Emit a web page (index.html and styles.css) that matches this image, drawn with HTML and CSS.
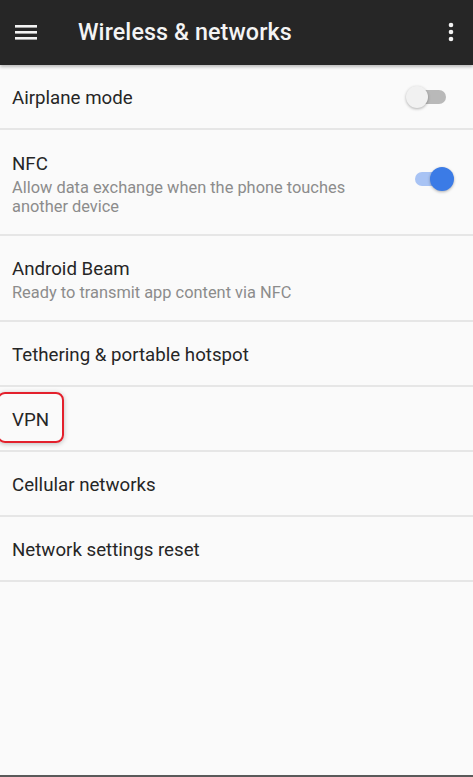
FILE: index.html
```html
<!DOCTYPE html>
<html>
<head>
<meta charset="utf-8">
<link rel="stylesheet" href="styles.css">
</head>
<body>
<div class="screen">
  <header class="toolbar">
    <svg class="menu" width="22" height="16" viewBox="0 0 22 16">
      <rect x="0" y="1" width="22" height="2.6" fill="#f2f2f2"/>
      <rect x="0" y="7" width="22" height="2.6" fill="#f2f2f2"/>
      <rect x="0" y="13" width="22" height="2.6" fill="#f2f2f2"/>
    </svg>
    <h1 class="title">Wireless &amp; networks</h1>
    <svg class="more" width="6" height="20" viewBox="0 0 6 20">
      <circle cx="3" cy="3" r="2.3" fill="#f2f2f2"/>
      <circle cx="3" cy="10" r="2.3" fill="#f2f2f2"/>
      <circle cx="3" cy="17" r="2.3" fill="#f2f2f2"/>
    </svg>
  </header>
  <main class="list">
    <div class="row row-single">
      <div class="text"><div class="primary">Airplane mode</div></div>
      <div class="switch off"><span class="track"></span><span class="thumb"></span></div>
    </div>
    <div class="row row-triple">
      <div class="text">
        <div class="primary">NFC</div>
        <div class="secondary">Allow data exchange when the phone touches another device</div>
      </div>
      <div class="switch on"><span class="track"></span><span class="thumb"></span></div>
    </div>
    <div class="row row-double">
      <div class="text">
        <div class="primary">Android Beam</div>
        <div class="secondary">Ready to transmit app content via NFC</div>
      </div>
    </div>
    <div class="row row-single">
      <div class="text"><div class="primary">Tethering &amp; portable hotspot</div></div>
    </div>
    <div class="row row-single">
      <div class="text"><div class="primary vpn">VPN<span class="highlight"></span></div></div>
    </div>
    <div class="row row-single">
      <div class="text"><div class="primary">Cellular networks</div></div>
    </div>
    <div class="row row-single">
      <div class="text"><div class="primary">Network settings reset</div></div>
    </div>
  </main>
</div>
</body>
</html>
```
FILE: styles.css
```css
* { box-sizing: border-box; }
html, body { margin: 0; padding: 0; }
body {
  width: 473px;
  height: 777px;
  overflow: hidden;
  background: #fafafa;
  font-family: Roboto, "Liberation Sans", sans-serif;
}
.screen {
  height: 777px;
  display: flex;
  flex-direction: column;
  border-bottom: 2px solid #5a5a5a;
  background: #fafafa;
}
.toolbar {
  height: 65px;
  background: #262626;
  display: flex;
  align-items: center;
  padding: 0 19px 0 15px;
  box-shadow: 0 2px 3px rgba(0,0,0,0.25);
  position: relative;
  z-index: 2;
  flex-shrink: 0;
}
.menu { display: block; margin-top: -2px; }
.title {
  margin: 0 0 0 41px;
  flex: 1;
  color: #f4f4f4;
  font-size: 23.3px;
  font-weight: 500;
  letter-spacing: 0.1px;
  margin-top: -1px;
}
.more { display: block; margin-top: -1px; }
.list {
  display: flex;
  flex-direction: column;
}
.row {
  display: flex;
  align-items: center;
  padding: 0 16px 0 12px;
  border-bottom: 2px solid #e6e6e6;
}
.row-single { height: 65px; }
.row-triple { height: 106px; }
.row-double { height: 86px; }
.text { flex: 1; }
.primary {
  font-size: 18.7px;
  color: #262626;
  line-height: 22px;
}
.secondary {
  font-size: 16.4px;
  color: #8c8c8c;
  line-height: 19.5px;
  margin-top: 3px;
  max-width: 360px;
}
.row-single .text { margin-top: 3px; }
.row-triple .text, .row-double .text { margin-top: 5px; }
.vpn { position: relative; display: inline-block; }
.highlight {
  position: absolute;
  left: -15px;
  top: -17px;
  width: 67px;
  height: 51px;
  border: 2.5px solid #e3202c;
  border-radius: 8px;
  box-shadow: 0 1px 5px rgba(0,0,0,0.25);
}
.switch {
  position: relative;
  height: 22px;
  flex-shrink: 0;
}
.track {
  position: absolute;
  top: 4px;
  height: 14px;
  border-radius: 7px;
}
.thumb {
  position: absolute;
  top: 0;
  width: 22px;
  height: 22px;
  border-radius: 50%;
  box-shadow: 0 1px 3px rgba(0,0,0,0.3);
}
.switch.off { width: 40px; margin-right: 11px; margin-top: 0; }
.switch.off .track { background: #b9b9b9; left: 4px; right: 0; }
.switch.off .thumb { left: 0; background: #f1f1f1; }
.switch.on { width: 39px; height: 24px; margin-right: 3px; margin-top: -6px; }
.switch.on .track { background: #a8c3f4; left: 0; right: 6px; top: 5px; }
.switch.on .thumb { left: 15px; width: 24px; height: 24px; background: #3b7be6; }
```
